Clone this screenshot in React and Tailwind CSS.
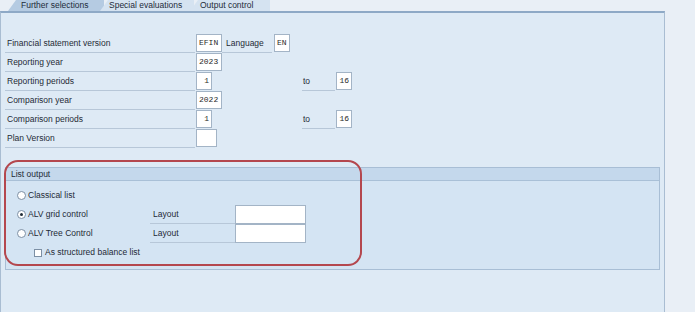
import React from "react";

const sans = "font-['Liberation_Sans',Arial,sans-serif]";
const mono = "font-['Liberation_Mono','Courier_New',monospace]";

const Field = ({ w, value, right, h = "h-[18px]" }) => (
  <div
    className={`${w} ${h} ${mono} bg-white border border-[#a3b4c6] text-[8px] text-[#2a2a2a] flex items-center px-[2px] ${
      right ? "justify-end" : "justify-start"
    }`}
  >
    {value}
  </div>
);

const LabelCell = ({ w, children, pl = "pl-[2px]" }) => (
  <div className={`${w} h-[19px] border-b border-[#b7c7d8] flex items-center ${pl} text-[#1e2a36]`}>
    {children}
  </div>
);

const Tab = ({ label, className }) => (
  <div
    className={`h-[11px] flex items-center leading-none [clip-path:polygon(8px_0,100%_0,100%_100%,0_100%)] ${className}`}
  >
    {label}
  </div>
);

const Radio = ({ checked }) => (
  <div className="w-[9px] h-[9px] rounded-full bg-white border border-[#7c8fa4] flex items-center justify-center">
    {checked && <div className="w-[3px] h-[3px] rounded-full bg-[#202c38]" />}
  </div>
);

export default function App() {
  return (
    <div className={`relative w-[695px] h-[312px] bg-[#e9eff6] flex flex-col overflow-hidden text-[8.5px] ${sans}`}>
      {/* tabs */}
      <div className="flex h-[11px] text-[#1d2b3a]">
        <Tab label="Further selections" className="ml-[8px] w-[96px] pl-[13px] bg-[#b5cbe2]" />
        <Tab label="Special evaluations" className="ml-[-4px] w-[94px] pl-[9px] bg-[#d5e3f1]" />
        <Tab label="Output control" className="ml-[-4px] w-[80px] pl-[10px] bg-[#d5e3f1]" />
      </div>

      {/* panel */}
      <div className="flex flex-1">
        <div className="w-[665px] bg-[#deeaf5] border-t-2 border-t-[#8ea9c6] border-l border-r border-[#a9bdd2] pt-[21px] pl-[4px]">
          <div className="flex h-[19px]">
            <LabelCell w="w-[190px]">Financial statement version</LabelCell>
            <div className="ml-[1px]"><Field w="w-[26px]" value="EFIN" /></div>
            <LabelCell w="w-[50px]" pl="pl-[4px]">Language</LabelCell>
            <div className="ml-[2px]"><Field w="w-[16px]" value="EN" /></div>
          </div>
          <div className="flex h-[19px]">
            <LabelCell w="w-[190px]">Reporting year</LabelCell>
            <div className="ml-[1px]"><Field w="w-[26px]" value="2023" /></div>
          </div>
          <div className="flex h-[19px]">
            <LabelCell w="w-[190px]">Reporting periods</LabelCell>
            <div className="ml-[1px]"><Field w="w-[16px]" value="1" right /></div>
            <div className="ml-[90px]"><LabelCell w="w-[33px]" pl="pl-[1px]">to</LabelCell></div>
            <div className="ml-[1px]"><Field w="w-[16px]" value="16" right /></div>
          </div>
          <div className="flex h-[19px]">
            <LabelCell w="w-[190px]">Comparison year</LabelCell>
            <div className="ml-[1px]"><Field w="w-[26px]" value="2022" /></div>
          </div>
          <div className="flex h-[19px]">
            <LabelCell w="w-[190px]">Comparison periods</LabelCell>
            <div className="ml-[1px]"><Field w="w-[16px]" value="1" right /></div>
            <div className="ml-[90px]"><LabelCell w="w-[33px]" pl="pl-[1px]">to</LabelCell></div>
            <div className="ml-[1px]"><Field w="w-[16px]" value="16" right /></div>
          </div>
          <div className="flex h-[19px]">
            <LabelCell w="w-[190px]">Plan Version</LabelCell>
            <div className="ml-[1px]"><Field w="w-[21px]" value="" /></div>
          </div>

          {/* List output group */}
          <div className="mt-[19px] w-[655px] h-[103px] bg-[#d4e4f3] border border-[#a8bed5] text-[#1e2a36]">
            <div className="h-[13px] bg-[#c4d8ec] border-b border-[#a9c0d7] pl-[5px] flex items-center">List output</div>
            <div className="pt-[5px] pl-[11px]">
              <div className="flex h-[19px] items-center">
                <Radio />
                <span className="ml-[2px]">Classical list</span>
              </div>
              <div className="flex h-[19px]">
                <div className="w-[133px] flex items-center">
                  <Radio checked />
                  <span className="ml-[2px]">ALV grid control</span>
                </div>
                <LabelCell w="w-[85px]" pl="pl-[3px]">Layout</LabelCell>
                <Field w="w-[71px]" h="h-[19px]" value="" />
              </div>
              <div className="flex h-[19px]">
                <div className="w-[133px] flex items-center">
                  <Radio />
                  <span className="ml-[2px]">ALV Tree Control</span>
                </div>
                <LabelCell w="w-[85px]" pl="pl-[3px]">Layout</LabelCell>
                <Field w="w-[71px]" h="h-[19px]" value="" />
              </div>
              <div className="flex h-[19px] items-center pl-[17px]">
                <div className="w-[8px] h-[8px] bg-white border border-[#7c8fa4]" />
                <span className="ml-[3px]">As structured balance list</span>
              </div>
            </div>
          </div>
        </div>
      </div>

      {/* annotation */}
      <div className="absolute left-[4px] top-[160px] w-[358px] h-[106px] border-2 border-[#b4474e] rounded-[14px]" />
    </div>
  );
}
